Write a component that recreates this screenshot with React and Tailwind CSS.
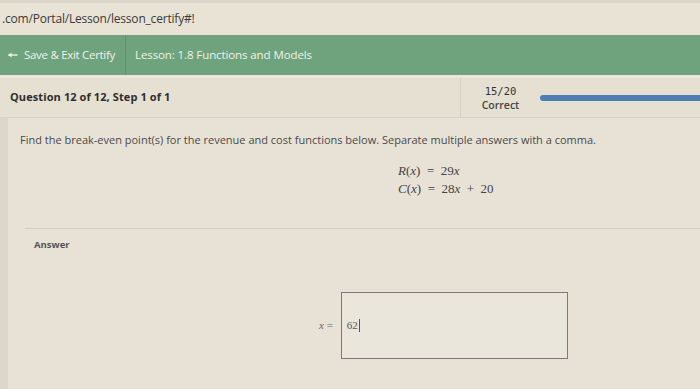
import React from "react";

export default function App() {
  return (
    <div className="w-[700px] h-[389px] overflow-hidden bg-[#e4ddd0] flex flex-col" style={{ fontFamily: '"Open Sans", "Noto Sans", sans-serif' }}>
      {/* URL bar */}
      <div className="h-[35px] bg-[#e9e3d5] border-t-[3px] border-[#dcd6ca] flex items-center pl-[2px]">
        <span className="text-[12px] text-[#3a3a3a] tracking-[-0.2px]">.com/Portal/Lesson/lesson_certify#!</span>
      </div>
      {/* Green bar */}
      <div className="h-[40px] bg-[#6ea37e] flex items-stretch">
        <div className="flex items-center pl-[8px] pr-[10px] border-r border-[#5f9270] gap-[6px]">
          <svg width="10" height="6" viewBox="0 0 10 6" className="shrink-0">
            <path d="M0.5 3 L9.5 3" stroke="#f2f2ea" strokeWidth="1.4" />
            <path d="M0 3 L3.5 0.6 L3.5 5.4 Z" fill="#f2f2ea" />
          </svg>
          <span className="text-[#f2f2ea] text-[11.5px] tracking-[-0.3px]">Save &amp; Exit Certify</span>
        </div>
        <div className="flex items-center pl-[9px]">
          <span className="text-[#f2f2ea] text-[11.5px] tracking-[-0.1px]">Lesson: 1.8 Functions and Models</span>
        </div>
      </div>
      <div className="h-[3px] bg-[#ebe6da]" />
      {/* Question header */}
      <div className="h-[40px] bg-[#e6e0d3] flex items-stretch border-b border-[#d8d2c6]">
        <div className="flex-1 flex items-center pl-[10px]">
          <span className="text-[11px] font-bold text-[#2e2e2e] tracking-[0.1px]">Question 12 of 12, Step 1 of 1</span>
        </div>
        <div className="w-[80px] border-l border-[#d6d0c4] flex flex-col items-center justify-center">
          <span className="text-[10.5px] text-[#333] leading-[14px]" style={{ fontFamily: '"DejaVu Sans Mono", monospace' }}>15/20</span>
          <span className="text-[10.5px] font-semibold text-[#444] leading-[14px]">Correct</span>
        </div>
        <div className="w-[160px] flex items-center">
          <div className="w-full h-[6px] bg-[#4f7db3] rounded-l-[3px]" />
        </div>
      </div>
      {/* Content */}
      <div className="flex-1 flex">
        <div className="w-[8px] bg-[#ddd7cb]" />
        <div className="flex-1 bg-[#e8e2d6] flex flex-col">
          <div className="pl-[12px] pt-[14px]">
            <p className="text-[11px] text-[#4a4a4a] tracking-[0px]">Find the break-even point(s) for the revenue and cost functions below. Separate multiple answers with a comma.</p>
          </div>
          <div className="pl-[390px] pt-[13px] flex flex-col text-[13px] leading-[18px] text-[#444]" style={{ fontFamily: '"Liberation Serif", serif' }}>
            <div><i>R</i>(<i>x</i>) &nbsp;=&nbsp; 29<i>x</i></div>
            <div><i>C</i>(<i>x</i>) &nbsp;=&nbsp; 28<i>x</i> &nbsp;+&nbsp; 20</div>
          </div>
          <div className="mt-[30px] ml-[17px] border-t border-[#d4cec2]" />
          <div className="pl-[26px] pt-[1px]">
            <span className="text-[9.5px] font-bold text-[#555]">Answer</span>
          </div>
          <div className="pl-[311px] pt-[38px] flex items-center gap-[8px]">
            <span className="text-[11px] text-[#666]" style={{ fontFamily: '"Liberation Serif", serif' }}><i>x</i> =</span>
            <div className="w-[227px] h-[67px] border border-[#7a7a7a] bg-[#ebe6db] flex items-center pl-[5px]">
              <span className="text-[11px] text-[#555]" style={{ fontFamily: '"Liberation Serif", serif' }}>62</span>
              <span className="w-px h-[13px] bg-[#555] ml-[1px]" />
            </div>
          </div>
        </div>
      </div>
    </div>
  );
}
